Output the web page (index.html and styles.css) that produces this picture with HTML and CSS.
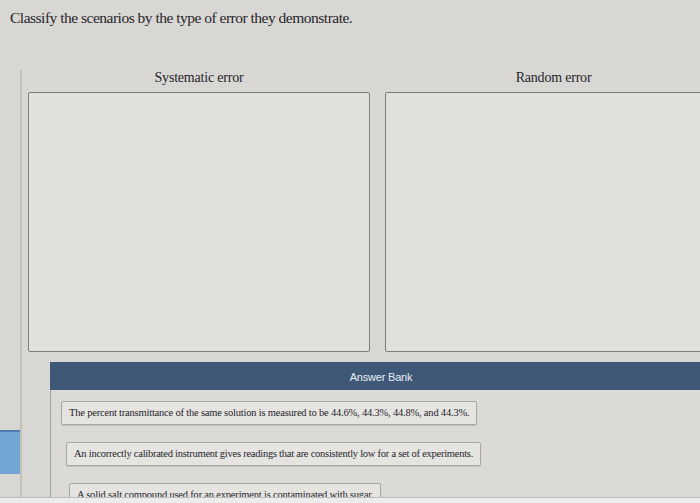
FILE: index.html
```html
<!DOCTYPE html>
<html>
<head>
    <title>Classify the scenarios</title>
    <link rel="stylesheet" href="styles.css">
</head>
<body>
    <div class="screen">
        <h1 class="prompt">Classify the scenarios by the type of error they demonstrate.</h1>

        <div class="workspace">
            <div class="rail">
                <div class="rail-tab"></div>
            </div>

            <div class="content">
                <div class="bins">
                    <div class="bin">
                        <div class="bin-title">Systematic error</div>
                        <div class="bin-drop"></div>
                    </div>
                    <div class="bin">
                        <div class="bin-title">Random error</div>
                        <div class="bin-drop"></div>
                    </div>
                </div>

                <div class="bank">
                    <div class="bank-header">Answer Bank</div>
                    <div class="bank-items">
                        <div class="tile">The percent transmittance of the same solution is measured to be 44.6%, 44.3%, 44.8%, and 44.3%.</div>
                        <div class="tile tile-shift">An incorrectly calibrated instrument gives readings that are consistently low for a set of experiments.</div>
                        <div class="tile tile-shift2">A solid salt compound used for an experiment is contaminated with sugar.</div>
                    </div>
                </div>
            </div>
        </div>
    </div>
    <div class="bezel"></div>
</body>
</html>
```

FILE: styles.css
```css
html, body {
    margin: 0;
    height: 503px;
    overflow: hidden;
}

body {
    background-color: #d9d7d3;
    font-family: "Liberation Serif", "Times New Roman", serif;
    color: #26262c;
}

.screen {
    height: 497px;
    overflow: hidden;
    background-color: #d9d7d3;
}

.prompt {
    margin: 0;
    padding: 8px 0 0 10px;
    font-size: 15.5px;
    font-weight: normal;
    letter-spacing: -0.5px;
    line-height: 20px;
}

.workspace {
    display: flex;
    margin-top: 42px;
}

/* left side rail with the selected blue tab */
.rail {
    width: 20px;
    flex-shrink: 0;
    border-right: 2px solid #c3c1bd;
    padding-top: 360px;
}

.rail-tab {
    height: 42px;
    background-color: #72a6d4;
    border-top: 2px solid #4d7fae;
}

.content {
    flex: 1;
    padding-left: 6px;
}

.bins {
    display: grid;
    grid-template-columns: 342px 337px;
    gap: 15px;
}

.bin-title {
    text-align: center;
    font-size: 14px;
    letter-spacing: -0.2px;
    height: 22px;
    line-height: 16px;
}

.bin-drop {
    height: 258px;
    border: 1px solid #7f7d79;
    background-color: #e2e0dd;
    border-radius: 2px;
}

.bank {
    margin: 10px 0 0 22px;
}

.bank-header {
    background-color: #3f5877;
    color: #e8eef4;
    font-family: "Liberation Sans", Arial, sans-serif;
    font-size: 11px;
    text-align: center;
    height: 28px;
    line-height: 30px;
    letter-spacing: -0.2px;
    padding-right: 10px;
}

.bank-items {
    display: flex;
    flex-direction: column;
    align-items: flex-start;
    gap: 17px;
    padding: 11px 0 0 10px;
    border-left: 1px solid #a8a6a2;
    background-color: #dcdad6;
    height: 120px;
}

.tile {
    background-color: #e5e4e1;
    border: 1px solid #a9a7a3;
    border-radius: 2px;
    box-shadow: 0 1px 1px rgba(0, 0, 0, 0.12);
    font-size: 10.5px;
    letter-spacing: -0.2px;
    height: 22px;
    line-height: 22px;
    padding: 0 7px;
    white-space: nowrap;
}

.tile-shift {
    margin-left: 5px;
    letter-spacing: -0.25px;
}

.tile-shift2 {
    margin-left: 8px;
}

.bezel {
    height: 6px;
    background-color: #ececea;
    border-top: 1px solid #bdbbb7;
}
```
